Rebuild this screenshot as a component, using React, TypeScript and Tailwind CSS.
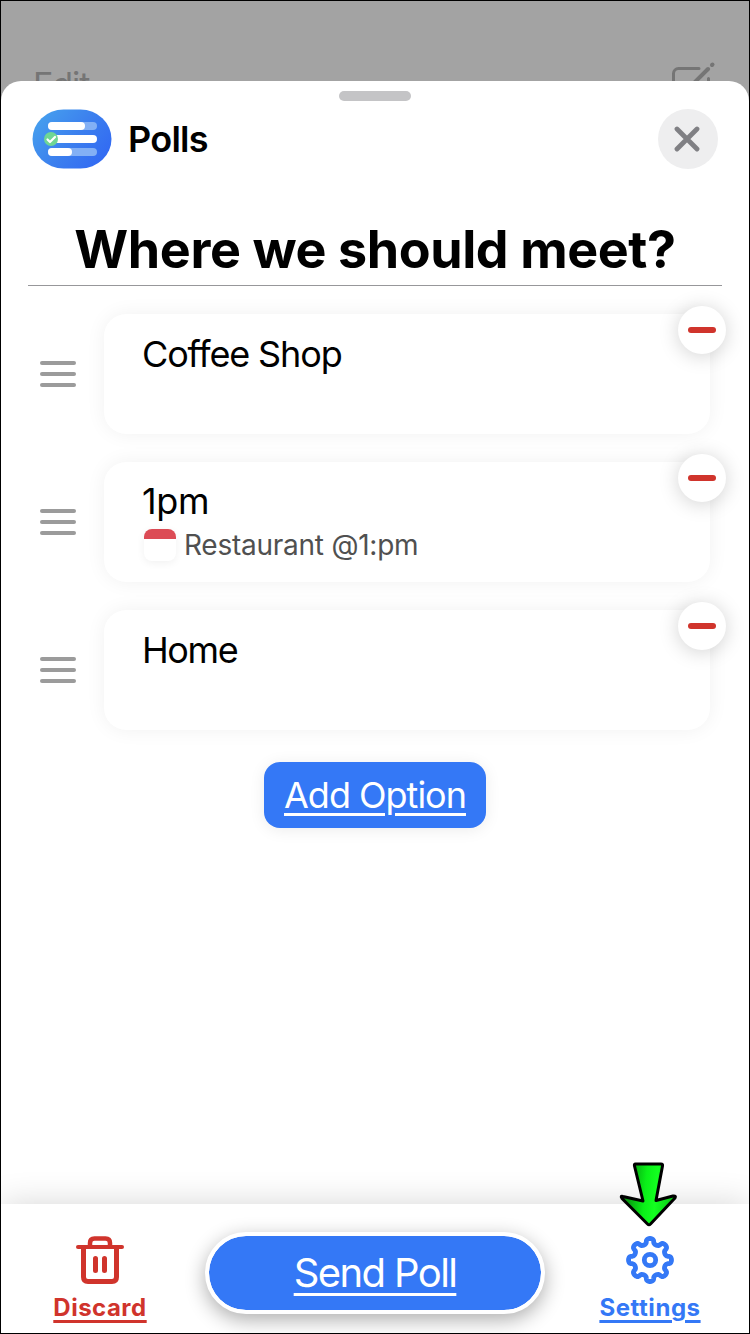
type Option = {
  title: string;
  detail?: string;
  tracking: string;
};

const options: Option[] = [
  { title: "Coffee Shop", tracking: "tracking-[-1.15px]" },
  { title: "1pm", detail: "Restaurant @1:pm", tracking: "tracking-[-0.4px]" },
  { title: "Home", tracking: "tracking-[-1.4px]" },
];

// eight rounded teeth around the hub
const gearPath =
  Array.from({ length: 160 }, (_, i) => {
    const t = (i / 160) * Math.PI * 2;
    const r = 18.8 + 2.7 * Math.cos(8 * t);
    const a = t + 0.045 * Math.sin(16 * t);
    const x = 25 + r * Math.cos(a);
    const y = 25 + r * Math.sin(a);
    return `${i === 0 ? "M" : "L"}${x.toFixed(2)} ${y.toFixed(2)}`;
  }).join("") + "Z";

function PollsLogo() {
  return (
    <svg width="80" height="60" viewBox="0 0 80 60">
      <defs>
        <linearGradient id="logo" x1="0" y1="0.2" x2="1" y2="0.8">
          <stop offset="0" stopColor="#46a0ee" />
          <stop offset="0.5" stopColor="#3c80ee" />
          <stop offset="1" stopColor="#3168f3" />
        </linearGradient>
      </defs>
      <rect x="0.5" y="0.5" width="79" height="59" rx="31" ry="29.5" fill="url(#logo)" />
      <g fill="#83b0f5">
        <rect x="16" y="13" width="49" height="8" rx="4" />
        <rect x="16" y="39" width="49" height="8" rx="4" />
      </g>
      <g fill="#fff">
        <rect x="16" y="13" width="37" height="8" rx="4" />
        <rect x="16" y="26" width="49" height="8" rx="4" />
        <rect x="16" y="39" width="24" height="8" rx="4" />
      </g>
      <circle cx="19" cy="30" r="7" fill="#6fd694" />
      <path d="M15.500 30.500l2.500 2.500 5-5" fill="none" stroke="#fff" strokeWidth="2.200" strokeLinecap="round" strokeLinejoin="round" />
    </svg>
  );
}

function ComposeIcon() {
  return (
    <svg width="46" height="46" viewBox="0 0 46 46" fill="none" stroke="#757575" strokeWidth="3" strokeLinecap="round">
      <path d="M29 7.5H8.500a5 5 0 0 0-5 5V35a5 5 0 0 0 5 5h25a5 5 0 0 0 5-5V17.500" />
      <path d="M19 27L38 8" strokeWidth="4" />
      <path d="M42 4l.5-.5" strokeWidth="4" />
    </svg>
  );
}

function TrashIcon() {
  return (
    <svg width="48" height="50" viewBox="0 0 48 50" fill="none" stroke="#d0342c" strokeWidth="5" strokeLinecap="round" strokeLinejoin="round">
      <path d="M2 13h44" strokeWidth="4" />
      <path d="M14 12V9q0-4.500 4.500-4.500h11q4.500 0 4.500 4.500v3" strokeWidth="4.500" />
      <path d="M7.500 13.500V43q0 4.500 4.500 4.500h24q4.500 0 4.500-4.500V13.500" />
      <path d="M19.500 24.500v12M28.500 24.500v12" />
    </svg>
  );
}

function GearIcon() {
  return (
    <svg width="50" height="50" viewBox="0 0 50 50" fill="none" stroke="#3478f6" strokeWidth="4.800" strokeLinejoin="round">
      <path d={gearPath} />
      <circle cx="25" cy="25" r="5.700" />
    </svg>
  );
}

function ArrowPointer() {
  return (
    <svg width="60" height="68" viewBox="0 0 60 68">
      <defs>
        <linearGradient id="arrow" x1="0" y1="0.3" x2="1" y2="0.4">
          <stop offset="0.15" stopColor="#079d10" />
          <stop offset="0.45" stopColor="#0af018" />
          <stop offset="0.65" stopColor="#13ff20" />
          <stop offset="0.95" stopColor="#0bd016" />
        </linearGradient>
      </defs>
      <path
        d="M16.500 3H42Q44 3 43.500 5L37 39.500L54 35Q57.500 34.500 56 37L31.500 63Q30 64.500 28.500 63L3 37.500Q1 34.500 4 35.500L24 40L15.500 5Q15 3 16.500 3Z"
        fill="url(#arrow)"
        stroke="#000"
        strokeWidth="3"
        strokeLinejoin="round"
      />
    </svg>
  );
}

function OptionRow({ title, detail, tracking }: Option) {
  return (
    <div className="flex h-[120px] items-center">
      <div className="ml-[39px] flex w-9 shrink-0 flex-col gap-[7px]">
        <span className="h-1 rounded-full bg-[#9b9b9b]" />
        <span className="h-1 rounded-full bg-[#9b9b9b]" />
        <span className="h-1 rounded-full bg-[#9b9b9b]" />
      </div>
      <div
        className={`relative ml-7 h-[120px] w-[606px] rounded-[22px] bg-white pl-[38px] shadow-[0_0_20px_rgba(0,0,0,0.06)] ${
          detail ? "pt-[17px]" : "pt-[18px]"
        }`}
      >
        <div className="h-11 text-[36px] leading-[44px] whitespace-nowrap">
          <span className={tracking}>{title}</span>
        </div>
        {detail && (
          <div className="mt-1.5 flex items-center gap-2 pl-0.5">
            <span className="h-8 w-8 overflow-hidden rounded-lg bg-white shadow-[0_2px_8px_rgba(0,0,0,0.06)]">
              <span className="block h-[10px] bg-[#dc4b55]" />
            </span>
            <span className="text-[28px] leading-8 tracking-[-0.25px] whitespace-nowrap text-[#505050]">{detail}</span>
          </div>
        )}
        <button className="absolute -top-2 -right-4 flex h-12 w-12 items-center justify-center rounded-full bg-white shadow-[0_2px_20px_rgba(0,0,0,0.18)]">
          <span className="h-1.5 w-7 rounded-full bg-[#d0342c]" />
        </button>
      </div>
    </div>
  );
}

function App() {
  return (
    <div className="flex h-[1334px] w-[750px] flex-col overflow-hidden border border-black bg-[#a3a3a3] font-[Inter,sans-serif] text-black">
      {/* Dimmed screen behind the sheet */}
      <div className="flex h-20 shrink-0 items-start justify-between overflow-hidden pr-[33px] pl-8 text-[#757575]">
        <span className="mt-[63px] text-[34px] leading-[42px] tracking-[-1.1px]">Edit</span>
        <span className="mt-[60px]">
          <ComposeIcon />
        </span>
      </div>

      <div className="flex min-h-0 flex-1 flex-col rounded-t-[20px] bg-white">
        <div className="mx-auto mt-[10px] h-[10px] w-[72px] shrink-0 rounded-full bg-[#c4c4c6]" />

        <header className="mt-2 flex h-[60px] shrink-0 items-center pr-[31px] pl-[31px]">
          <PollsLogo />
          <h2 className="ml-4 text-[36px] leading-[44px] font-semibold tracking-[-0.75px]">Polls</h2>
          <button className="ml-auto flex h-[60px] w-[60px] items-center justify-center rounded-full bg-[#eeeeef] pr-0.5">
            <svg width="26" height="26" viewBox="0 0 26 26" stroke="#808084" strokeWidth="4.800" strokeLinecap="round">
              <path d="M3 3l20 20M23 3L3 23" />
            </svg>
          </button>
        </header>

        <div className="mx-[27px] mt-[46px] flex h-[71px] shrink-0 items-start justify-center border-b border-[#97979a] pt-0.5 text-[52px] leading-[66px] font-bold whitespace-nowrap">
          <h1 className="tracking-[-0.4px]">Where we should meet?</h1>
        </div>

        <div className="mt-7 flex flex-col gap-7">
          {options.map((option) => (
            <OptionRow key={option.title} {...option} />
          ))}
        </div>

        <button className="mx-auto mt-8 flex h-[66px] w-[222px] shrink-0 items-center justify-center rounded-2xl bg-[#3478f6] text-[36px] text-white shadow-[0_2px_16px_rgba(0,0,0,0.08)]">
          <span className="tracking-[-1px] whitespace-nowrap underline decoration-[3px] underline-offset-[5px]">Add Option</span>
        </button>

        {/* Bottom bar */}
        <footer className="relative mt-auto flex h-[129px] shrink-0 bg-white shadow-[0_0_32px_rgba(0,0,0,0.16)]">
          <button className="flex w-[198px] flex-col items-center pt-[30px] text-[#d0342c]">
            <TrashIcon />
            <span className="mt-[9px] text-2xl leading-[30px] font-bold tracking-[0.5px] underline decoration-[3px] underline-offset-[4px]">Discard</span>
          </button>
          <button className="mt-7 ml-[6px] flex h-[82px] w-[340px] shrink-0 items-center justify-center rounded-full border-4 border-white bg-[#3478f6] bg-clip-padding text-[40px] text-white shadow-[0_6px_20px_rgba(0,0,0,0.32)]">
            <span className="tracking-[-1.6px] whitespace-nowrap underline decoration-[3px] underline-offset-[6px]">Send Poll</span>
          </button>
          <button className="ml-[6px] flex w-[198px] flex-col items-center pt-[31px] text-[#3478f6]">
            <GearIcon />
            <span className="mt-2 text-2xl leading-[30px] font-bold tracking-[0.55px] underline decoration-[3px] underline-offset-[4px]">Settings</span>
          </button>
          <span className="absolute -top-[43px] left-[618px]">
            <ArrowPointer />
          </span>
        </footer>
      </div>
    </div>
  );
}

export default App;
